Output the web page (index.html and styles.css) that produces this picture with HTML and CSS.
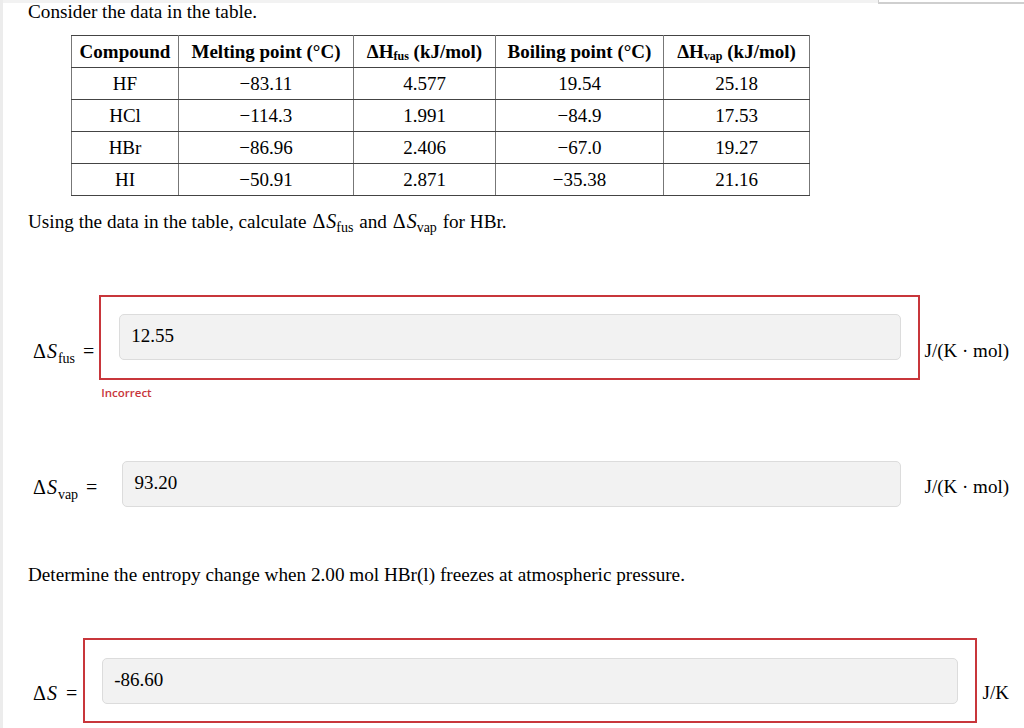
FILE: index.html
```html
<!DOCTYPE html>
<html>
<head>
<meta charset="utf-8">
<link rel="stylesheet" href="styles.css">
</head>
<body>
<div class="page">
  <div class="topbar"><div class="topbar-left"></div><div class="topbar-right"></div></div>
  <div class="content">
    <p class="intro">Consider the data in the table.</p>
    <table class="data">
      <tr>
        <th class="c1">Compound</th>
        <th class="c2">Melting point (°C)</th>
        <th class="c3">ΔH<sub>fus</sub> (kJ/mol)</th>
        <th class="c4">Boiling point (°C)</th>
        <th class="c5">ΔH<sub>vap</sub> (kJ/mol)</th>
      </tr>
      <tr><td>HF</td><td>−83.11</td><td>4.577</td><td>19.54</td><td>25.18</td></tr>
      <tr><td>HCl</td><td>−114.3</td><td>1.991</td><td>−84.9</td><td>17.53</td></tr>
      <tr><td>HBr</td><td>−86.96</td><td>2.406</td><td>−67.0</td><td>19.27</td></tr>
      <tr><td>HI</td><td>−50.91</td><td>2.871</td><td>−35.38</td><td>21.16</td></tr>
    </table>
    <p class="question q1">Using the data in the table, calculate <span class="m">Δ<i>S</i><sub>fus</sub></span> and <span class="m">Δ<i>S</i><sub>vap</sub></span> for HBr.</p>

    <div class="answer a-fus">
      <div class="label lab-shift">Δ<i>S</i><sub>fus</sub><span class="eq">=</span></div>
      <div class="field wrong"><div class="input">12.55</div></div>
      <div class="unit lab-shift">J/(K · mol)</div>
      <div class="feedback">Incorrect</div>
    </div>

    <div class="answer a-vap">
      <div class="label vap-shift">Δ<i>S</i><sub>vap</sub><span class="eq">=</span></div>
      <div class="field"><div class="input">93.20</div></div>
      <div class="unit vap-shift">J/(K · mol)</div>
    </div>

    <p class="question q2">Determine the entropy change when 2.00 mol HBr(l) freezes at atmospheric pressure.</p>

    <div class="answer a-s">
      <div class="label lab-shift2">Δ<i>S</i><span class="eq">=</span></div>
      <div class="field wrong wide"><div class="input in2">-86.60</div></div>
      <div class="unit lab-shift2">J/K</div>
    </div>
  </div>
</div>
</body>
</html>
```

FILE: styles.css
```css
html, body {
  margin: 0;
  padding: 0;
  background: #fff;
}
body {
  font-family: "Liberation Serif", "Times New Roman", serif;
  font-size: 19px;
  color: #000;
}
.page {
  border-left: 3px solid #ececec;
  min-height: 728px;
  box-sizing: border-box;
  overflow: hidden;
}
.topbar {
  display: flex;
  height: 3px;
}
.topbar-left {
  flex: 0 0 875px;
  background: #f2f2f2;
}
.topbar-right {
  flex: 1;
  border-left: 1px solid #cfcfcf;
  border-bottom: 2px solid #cfcfcf;
  height: 2px;
}
.content {
  padding: 0 15px 0 25px;
}
.intro {
  margin: 0;
  line-height: 18px;
  font-size: 19.2px;
}
.data {
  margin: 14px 0 0 43px;
  border-collapse: collapse;
  text-align: center;
}
.data th, .data td {
  border: 1px solid #444;
  border-left-color: #777;
  border-right-color: #777;
  padding: 0;
  height: 31px;
  line-height: 20px;
}
.data th {
  height: 31px;
  font-weight: bold;
}
.data sub {
  font-size: 12px;
  line-height: 0;
  vertical-align: -2px;
}
.c1 { width: 106px; }
.c2 { width: 174px; }
.c3 { width: 141px; }
.c4 { width: 167px; }
.c5 { width: 145px; }
.question {
  margin: 0;
  line-height: 20px;
  font-size: 19.2px;
}
.m {
  font-size: 20px;
  margin: 0 1px;
}
.m i {
  margin-left: 1px;
}
.question sub {
  font-size: 14px;
  line-height: 0;
  vertical-align: -4px;
}
.q1 { margin-top: 15px; }
.q2 { margin-top: 38px; }
.answer {
  display: grid;
  grid-template-columns: auto 1fr auto;
  column-gap: 5px;
  align-items: center;
}
.a-fus { margin-top: 63px; }
.a-vap { margin-top: 41px; }
.a-s { margin-top: 53px; column-gap: 6px; }
.label {
  font-family: "Liberation Serif", "DejaVu Serif", serif;
  font-size: 20px;
  margin-left: 5px;
  line-height: 20px;
  white-space: nowrap;
}
.label i {
  margin-left: 1px;
  margin-right: 1px;
}
.label sub {
  font-size: 14px;
  line-height: 0;
  vertical-align: -5px;
}
.eq {
  margin-left: 8px;
}
.unit {
  font-family: "Liberation Serif", "DejaVu Serif", serif;
  line-height: 20px;
  white-space: nowrap;
}
.lab-shift { padding-top: 26px; }
.lab-shift2 { padding-top: 24px; }
.vap-shift { padding-top: 4px; }
.field {
  border: 2px solid transparent;
  padding: 17px 17px 18px 18px;
}
.field.wrong {
  border-color: #c8363b;
}
.field.wide {
  padding: 18px 17px 17px 17px;
}
.input {
  font-family: "Liberation Serif", "DejaVu Serif", serif;
  font-size: 19px;
  height: 44px;
  background: #f2f2f2;
  border: 1px solid #dcdcdc;
  border-radius: 5px;
  box-sizing: content-box;
  padding-left: 11px;
  line-height: 42px;
}
.in2 { padding-left: 11px; }
.feedback {
  grid-column: 2;
  font-family: "Open Sans", "Liberation Sans", sans-serif;
  font-weight: 600;
  font-size: 11.5px;
  color: #c8363b;
  line-height: 16px;
  margin-top: 5px;
  padding-left: 2px;
}
```
